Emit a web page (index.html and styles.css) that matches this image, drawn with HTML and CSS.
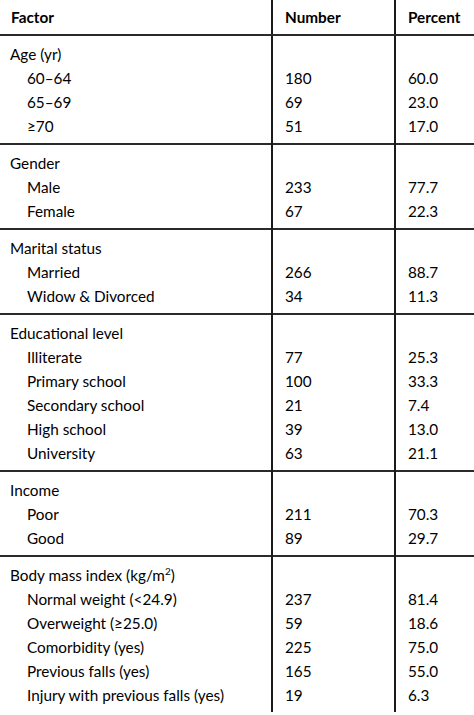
FILE: index.html
```html
<!DOCTYPE html>
<html>
<head>
<meta charset="utf-8">
<link rel="stylesheet" href="styles.css">
</head>
<body>
<table class="tbl">
  <colgroup><col class="c1"><col class="c2"><col class="c3"></colgroup>
  <thead>
    <tr><th>Factor</th><th>Number</th><th>Percent</th></tr>
  </thead>
  <tbody>
    <tr><td class="grp">Age (yr)</td><td></td><td></td></tr>
    <tr><td class="item">60–64</td><td>180</td><td>60.0</td></tr>
    <tr><td class="item">65–69</td><td>69</td><td>23.0</td></tr>
    <tr><td class="item">≥70</td><td>51</td><td>17.0</td></tr>
  </tbody>
  <tbody>
    <tr><td class="grp">Gender</td><td></td><td></td></tr>
    <tr><td class="item">Male</td><td>233</td><td>77.7</td></tr>
    <tr><td class="item">Female</td><td>67</td><td>22.3</td></tr>
  </tbody>
  <tbody>
    <tr><td class="grp">Marital status</td><td></td><td></td></tr>
    <tr><td class="item">Married</td><td>266</td><td>88.7</td></tr>
    <tr><td class="item">Widow &amp; Divorced</td><td>34</td><td>11.3</td></tr>
  </tbody>
  <tbody>
    <tr><td class="grp">Educational level</td><td></td><td></td></tr>
    <tr><td class="item">Illiterate</td><td>77</td><td>25.3</td></tr>
    <tr><td class="item">Primary school</td><td>100</td><td>33.3</td></tr>
    <tr><td class="item">Secondary school</td><td>21</td><td>7.4</td></tr>
    <tr><td class="item">High school</td><td>39</td><td>13.0</td></tr>
    <tr><td class="item">University</td><td>63</td><td>21.1</td></tr>
  </tbody>
  <tbody>
    <tr><td class="grp">Income</td><td></td><td></td></tr>
    <tr><td class="item">Poor</td><td>211</td><td>70.3</td></tr>
    <tr><td class="item">Good</td><td>89</td><td>29.7</td></tr>
  </tbody>
  <tbody>
    <tr><td class="grp">Body mass index (kg/m<sup>2</sup>)</td><td></td><td></td></tr>
    <tr><td class="item">Normal weight (&lt;24.9)</td><td>237</td><td>81.4</td></tr>
    <tr><td class="item">Overweight (≥25.0)</td><td>59</td><td>18.6</td></tr>
    <tr><td class="item">Comorbidity (yes)</td><td>225</td><td>75.0</td></tr>
    <tr><td class="item">Previous falls (yes)</td><td>165</td><td>55.0</td></tr>
    <tr><td class="item">Injury with previous falls (yes)</td><td>19</td><td>6.3</td></tr>
  </tbody>
</table>
</body>
</html>
```

FILE: styles.css
```css
html, body {
  margin: 0;
  padding: 0;
  background: #fff;
}
body {
  font-family: Lato, "Liberation Sans", sans-serif;
  font-size: 15.3px;
  color: #000;
  overflow: hidden;
}
.tbl {
  width: 474px;
  border-collapse: collapse;
  table-layout: fixed;
}
.c1 { width: 272px; }
.c2 { width: 123px; }
.c3 { width: 79px; }
.tbl th, .tbl td {
  padding: 0 0 0 11px;
  text-align: left;
  vertical-align: middle;
  line-height: 24px;
  white-space: nowrap;
}
.tbl th {
  font-weight: 700;
  padding-top: 5px;
  padding-bottom: 5px;
  border-bottom: 2px solid #2a2a2a;
}
.tbl th + th, .tbl td + td {
  border-left: 2px solid #1a1a1a;
  padding-left: 12px;
}
.tbl tbody + tbody tr:first-child td {
  border-top: 2px solid #2a2a2a;
}
.tbl tbody tr:first-child td {
  padding-top: 6px;
}
.tbl tbody tr:last-child td {
  padding-bottom: 5px;
}
.tbl td.grp {
  padding-left: 10px;
}
.tbl td.item {
  padding-left: 27px;
}
sup {
  font-size: 10px;
  line-height: 0;
  vertical-align: 6px;
}
```
